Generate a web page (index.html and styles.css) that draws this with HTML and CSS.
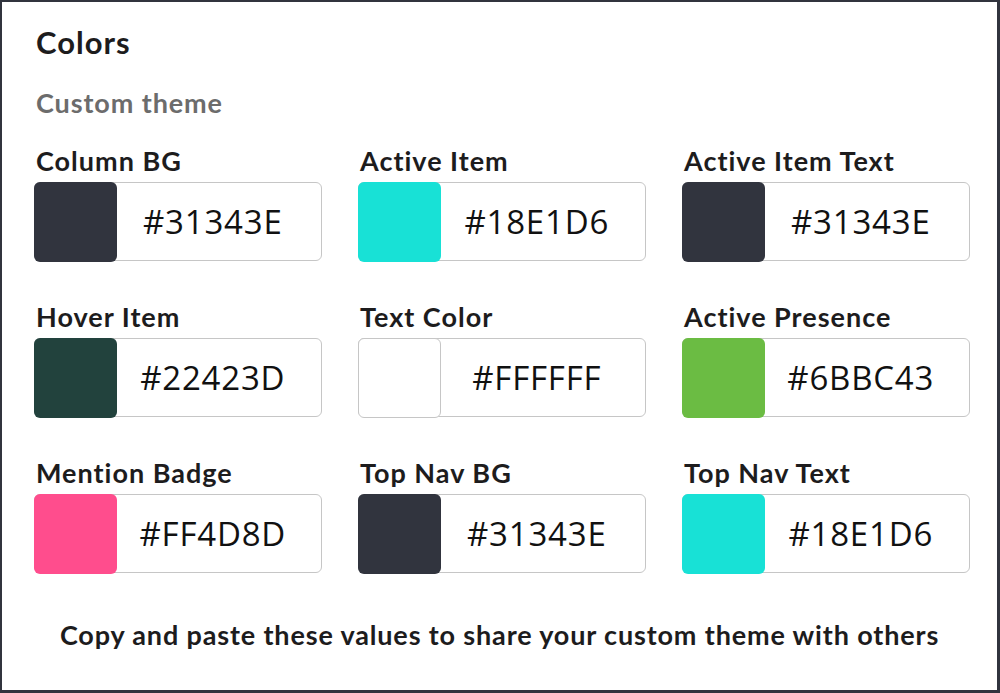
FILE: index.html
```html
<!DOCTYPE html>
<html lang="en">
<head>
<meta charset="utf-8">
<title>Colors</title>
<link rel="stylesheet" href="styles.css">
</head>
<body>
<div class="frame">
  <h1 class="title">Colors</h1>
  <h2 class="subtitle">Custom theme</h2>
  <div class="grid">
    <div class="item">
      <div class="label">Column BG</div>
      <div class="field"><span class="swatch" style="background:#31343E"></span><span class="value">#31343E</span></div>
    </div>
    <div class="item">
      <div class="label">Active Item</div>
      <div class="field"><span class="swatch" style="background:#18E1D6"></span><span class="value">#18E1D6</span></div>
    </div>
    <div class="item">
      <div class="label">Active Item Text</div>
      <div class="field"><span class="swatch" style="background:#31343E"></span><span class="value">#31343E</span></div>
    </div>
    <div class="item">
      <div class="label">Hover Item</div>
      <div class="field"><span class="swatch" style="background:#22423D"></span><span class="value">#22423D</span></div>
    </div>
    <div class="item">
      <div class="label">Text Color</div>
      <div class="field"><span class="swatch swatch-light" style="background:#FFFFFF"></span><span class="value">#FFFFFF</span></div>
    </div>
    <div class="item">
      <div class="label">Active Presence</div>
      <div class="field"><span class="swatch" style="background:#6BBC43"></span><span class="value">#6BBC43</span></div>
    </div>
    <div class="item">
      <div class="label">Mention Badge</div>
      <div class="field"><span class="swatch" style="background:#FF4D8D"></span><span class="value">#FF4D8D</span></div>
    </div>
    <div class="item">
      <div class="label">Top Nav BG</div>
      <div class="field"><span class="swatch" style="background:#31343E"></span><span class="value">#31343E</span></div>
    </div>
    <div class="item">
      <div class="label">Top Nav Text</div>
      <div class="field"><span class="swatch" style="background:#18E1D6"></span><span class="value">#18E1D6</span></div>
    </div>
  </div>
  <p class="note">Copy and paste these values to share your custom theme with others</p>
</div>
</body>
</html>
```
FILE: styles.css
```css
* { box-sizing: border-box; }
html, body { margin: 0; padding: 0; background: #ffffff; }
body { font-family: "Lato", "Liberation Sans", sans-serif; color: #1d1c1d; }

.frame {
  width: 1000px;
  height: 693px;
  border-style: solid;
  border-color: #31343e;
  border-width: 2px 3px 3px 2px;
  padding: 0 0 0 32px;
  overflow: hidden;
}

.title {
  margin: 20px 0 0 2px;
  font-size: 31px;
  line-height: 40px;
  font-weight: 700;
  letter-spacing: 1px;
}

.subtitle {
  margin: 25px 0 0 2px;
  font-size: 27px;
  line-height: 32px;
  font-weight: 700;
  letter-spacing: 0.9px;
  color: #6c6c6c;
}

.grid {
  margin-top: 28px;
  display: grid;
  grid-template-columns: repeat(3, 288px);
  column-gap: 36px;
  row-gap: 42px;
}

.label {
  font-size: 27px;
  line-height: 28px;
  font-weight: 700;
  letter-spacing: 1px;
  margin: 0 0 7px 2px;
  white-space: nowrap;
}

.field {
  display: flex;
  height: 79px;
  border: 1.5px solid #c6c6c6;
  border-radius: 6px;
  background: #fff;
}

.swatch {
  width: 83px;
  margin: -1.5px 0 -1.5px -1.5px;
  border-radius: 6px;
}

.swatch-light {
  border: 1.5px solid #c6c6c6;
}

.value {
  flex: 1;
  display: flex;
  align-items: center;
  justify-content: center;
  padding-right: 12px;
  font-family: "Open Sans", "Noto Sans", sans-serif;
  font-size: 33px;
  letter-spacing: 0.8px;
  color: #111;
}

.note {
  margin: 46px 0 0 -32px;
  text-align: center;
  font-size: 27px;
  line-height: 32px;
  font-weight: 700;
  letter-spacing: 0.85px;
  color: #1d1c1d;
  white-space: nowrap;
}
```
